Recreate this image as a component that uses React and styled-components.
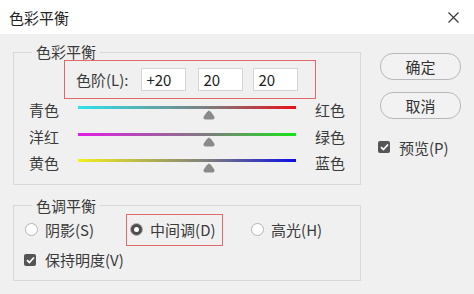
import React from "react";
import styled, { createGlobalStyle } from "styled-components";

const GlobalStyle = createGlobalStyle`
  html, body {
    margin: 0;
    padding: 0;
    background: #f0f0f0;
  }
  body {
    font-family: "Noto Sans CJK SC", "Noto Sans", sans-serif;
    color: #3a3a3a;
  }
`;

const Window = styled.div`
  width: 474px;
  height: 294px;
  background: #f0f0f0;
  overflow: hidden;
  display: flex;
  flex-direction: column;
`;

const TitleBar = styled.div`
  height: 34px;
  flex: none;
  background: #fff;
  display: flex;
  align-items: center;
  justify-content: space-between;
  padding: 0 15px 0 9px;
  box-sizing: border-box;
  font-size: 15px;
  color: #222;
`;

const Content = styled.div`
  display: flex;
  padding: 10px 0 0 13px;
`;

const LeftCol = styled.div`
  width: 348px;
  display: flex;
  flex-direction: column;
`;

const Group = styled.fieldset`
  margin: ${p => p.$top || 0}px 0 0 0;
  padding: 0 0 ${p => p.$bottom || 0}px 15px;
  border: 1px solid #d8d8d8;
  min-inline-size: 0;
  box-sizing: border-box;
`;

const Legend = styled.legend`
  margin-left: 3px;
  padding: 0 4px;
  font-size: 15px;
  line-height: 16px;
  height: 16px;
`;

const Highlight = styled.div`
  display: flex;
  align-items: center;
  border: 1px solid #e06a6a;
  box-sizing: border-box;
  height: ${p => p.$h}px;
  width: ${p => p.$w}px;
  margin-left: ${p => p.$ml}px;
  padding-left: ${p => p.$pl}px;
`;

const FieldLabel = styled.span`
  font-size: 15px;
  margin-right: 13px;
`;

const NumBox = styled.div`
  width: 45px;
  height: 23px;
  box-sizing: border-box;
  background: #fff;
  border: 1px solid #d4d4d4;
  margin-left: ${p => p.$ml || 0}px;
  padding-left: 4px;
  font-size: 15px;
  line-height: 21px;
  color: #222;
`;

const SliderRow = styled.div`
  display: grid;
  grid-template-columns: 49px 218px auto;
  align-items: start;
  height: 26.5px;
`;

const SideLabel = styled.span`
  font-size: 15px;
  line-height: 20px;
  padding-left: ${p => p.$pl || 0}px;
`;

const TrackArea = styled.div`
  position: relative;
  height: 26px;
`;

const Track = styled.div`
  position: absolute;
  left: 0;
  right: 0;
  top: 6px;
  height: 3px;
  background: linear-gradient(to right, ${p => p.$from}, #7d7d7d 60%, ${p => p.$to});
`;

const Thumb = styled.svg`
  position: absolute;
  top: 10px;
  margin-left: -6px;
`;

const OptionsRow = styled.div`
  display: flex;
  align-items: center;
  height: 32px;
`;

const Option = styled.label`
  display: flex;
  align-items: center;
  font-size: 15px;
  margin-left: ${p => p.$ml || 0}px;
`;

const Radio = styled.span`
  width: 13px;
  height: 13px;
  box-sizing: border-box;
  border-radius: 50%;
  border: 1px solid #b4b4b4;
  background: ${p => (p.$checked ? "#4f4f4f" : "#fff")};
  display: flex;
  align-items: center;
  justify-content: center;
  margin-right: 7px;
  &::after {
    content: "";
    display: ${p => (p.$checked ? "block" : "none")};
    width: 5px;
    height: 5px;
    border-radius: 50%;
    background: #fff;
  }
`;

const CheckRow = styled.div`
  display: flex;
  align-items: center;
  height: 20px;
  margin-top: ${p => p.$top || 0}px;
  margin-left: ${p => p.$ml || 0}px;
`;

const Box = styled.span`
  width: 12px;
  height: 12px;
  border-radius: 2px;
  background: #555;
  display: flex;
  align-items: center;
  justify-content: center;
  margin-right: 9px;
`;

const CheckText = styled.span`
  font-size: 15px;
`;

const RightCol = styled.div`
  margin-left: 19px;
  padding-top: 9px;
  display: flex;
  flex-direction: column;
`;

const Button = styled.button`
  width: 81px;
  height: 27px;
  border: 1px solid #b8b8b8;
  border-radius: 13px;
  background: #f2f2f2;
  font-family: inherit;
  font-size: 15px;
  color: #333;
  padding: 0;
  margin-bottom: ${p => p.$mb || 0}px;
`;

const Check = ({ children, top, ml }) => (
  <CheckRow $top={top} $ml={ml}>
    <Box>
      <svg width="9" height="8" viewBox="0 0 9 8">
        <path d="M1 4.2 L3.4 6.5 L8 1.5" fill="none" stroke="#fff" strokeWidth="1.8" />
      </svg>
    </Box>
    <CheckText>{children}</CheckText>
  </CheckRow>
);

const sliders = [
  { left: "青色", right: "红色", from: "#2de3e8", to: "#e8101a" },
  { left: "洋红", right: "绿色", from: "#e21ee6", to: "#17e317" },
  { left: "黄色", right: "蓝色", from: "#f0f01c", to: "#0d0de6" },
];

export default function App() {
  return (
    <Window>
      <GlobalStyle />
      <TitleBar>
        <span>色彩平衡</span>
        <svg width="11" height="11" viewBox="0 0 11 11">
          <path d="M0.5 0.5 L10.5 10.5 M10.5 0.5 L0.5 10.5" stroke="#333" strokeWidth="1.1" />
        </svg>
      </TitleBar>
      <Content>
        <LeftCol>
          <Group $bottom={4}>
            <Legend>色彩平衡</Legend>
            <Highlight $h={39} $w={252} $ml={35} $pl={11}>
              <FieldLabel>色阶(L):</FieldLabel>
              <NumBox>+20</NumBox>
              <NumBox $ml={12}>20</NumBox>
              <NumBox $ml={10}>20</NumBox>
            </Highlight>
            <div style={{ height: 1 }} />
            {sliders.map(s => (
              <SliderRow key={s.left}>
                <SideLabel>{s.left}</SideLabel>
                <TrackArea>
                  <Track $from={s.from} $to={s.to} />
                  <Thumb width="12" height="10" viewBox="0 0 12 10" style={{ left: "60%" }}>
                    <path d="M6 0.5 C7 0.5 11.5 6 11.5 7.5 C11.5 9 10.5 9.5 9 9.5 L3 9.5 C1.5 9.5 0.5 9 0.5 7.5 C0.5 6 5 0.5 6 0.5 Z" fill="#8a8a8a" />
                  </Thumb>
                </TrackArea>
                <SideLabel $pl={19}>{s.right}</SideLabel>
              </SliderRow>
            ))}
          </Group>
          <Group $top={13} $bottom={10}>
            <Legend>色调平衡</Legend>
            <OptionsRow>
              <Option $ml={-4}>
                <Radio />
                阴影(S)
              </Option>
              <Highlight $h={32} $w={97} $ml={32} $pl={3}>
                <Option>
                  <Radio $checked />
                  中间调(D)
                </Option>
              </Highlight>
              <Option $ml={28}>
                <Radio />
                高光(H)
              </Option>
            </OptionsRow>
            <Check top={4} ml={-5}>保持明度(V)</Check>
          </Group>
        </LeftCol>
        <RightCol>
          <Button $mb={12}>确定</Button>
          <Button>取消</Button>
          <Check top={18} ml={-2}>预览(P)</Check>
        </RightCol>
      </Content>
    </Window>
  );
}
